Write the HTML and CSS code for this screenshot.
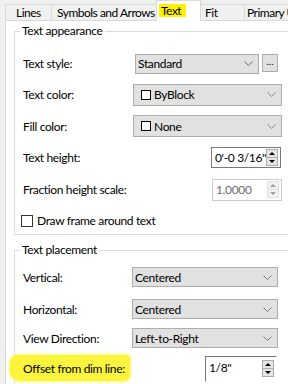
FILE: index.html
```html
<!DOCTYPE html>
<html lang="en">
<head>
    <meta charset="UTF-8">
    <meta name="viewport" content="width=device-width, initial-scale=1.0">
    <title>Dimension Style - Text</title>
    <link rel="stylesheet" href="styles.css">
</head>
<body>

<div class="window">
    <div class="tabs">
        <div class="tab tab-lines">Lines</div>
        <div class="tab tab-symbols">Symbols and Arrows</div>
        <div class="tab tab-text active"><span class="mark">Text</span></div>
        <div class="tab tab-fit">Fit</div>
        <div class="tab tab-primary">Primary U</div>
    </div>

    <div class="panel">
        <fieldset class="group">
            <legend>Text appearance</legend>

            <div class="row row-style">
                <span class="label">Text style:</span>
                <div class="combo combo-style">
                    <span class="value">Standard</span>
                    <svg class="chev" width="9" height="5" viewBox="0 0 9 5"><polyline points="0.5,0.5 4.5,4.5 8.5,0.5" fill="none" stroke="#6a6a6a" stroke-width="1"/></svg>
                </div>
                <div class="dots">...</div>
            </div>

            <div class="row row-color">
                <span class="label">Text color:</span>
                <div class="combo combo-color">
                    <span class="swatch"></span>
                    <span class="value">ByBlock</span>
                    <svg class="chev" width="9" height="5" viewBox="0 0 9 5"><polyline points="0.5,0.5 4.5,4.5 8.5,0.5" fill="none" stroke="#8a8a8a" stroke-width="1"/></svg>
                </div>
            </div>

            <div class="row row-fill">
                <span class="label">Fill color:</span>
                <div class="combo combo-color">
                    <span class="swatch"></span>
                    <span class="value">None</span>
                    <svg class="chev" width="9" height="5" viewBox="0 0 9 5"><polyline points="0.5,0.5 4.5,4.5 8.5,0.5" fill="none" stroke="#8a8a8a" stroke-width="1"/></svg>
                </div>
            </div>

            <div class="row row-height">
                <span class="label">Text height:</span>
                <div class="spin spin-height">
                    <span class="value">0'-0 3/16"</span>
                    <div class="spin-btns">
                        <div class="spin-btn"><span class="tri-up"></span></div>
                        <div class="spin-btn"><span class="tri-down"></span></div>
                    </div>
                </div>
            </div>

            <div class="row row-fraction">
                <span class="label">Fraction height scale:</span>
                <div class="spin spin-fraction disabled">
                    <span class="value">1.0000</span>
                    <div class="spin-btns">
                        <div class="spin-btn"><span class="tri-up"></span></div>
                        <div class="spin-btn"><span class="tri-down"></span></div>
                    </div>
                </div>
            </div>

            <div class="row row-check">
                <span class="checkbox"></span>
                <span>Draw frame around text</span>
            </div>
        </fieldset>

        <fieldset class="group group-placement">
            <legend>Text placement</legend>

            <div class="row row-vertical">
                <span class="label">Vertical:</span>
                <div class="combo combo-place">
                    <span class="value">Centered</span>
                    <svg class="chev" width="9" height="5" viewBox="0 0 9 5"><polyline points="0.5,0.5 4.5,4.5 8.5,0.5" fill="none" stroke="#7a7a7a" stroke-width="1"/></svg>
                </div>
            </div>

            <div class="row row-horizontal">
                <span class="label">Horizontal:</span>
                <div class="combo combo-place">
                    <span class="value">Centered</span>
                    <svg class="chev" width="9" height="5" viewBox="0 0 9 5"><polyline points="0.5,0.5 4.5,4.5 8.5,0.5" fill="none" stroke="#7a7a7a" stroke-width="1"/></svg>
                </div>
            </div>

            <div class="row row-view">
                <span class="label">View Direction:</span>
                <div class="combo combo-place">
                    <span class="value">Left-to-Right</span>
                    <svg class="chev" width="9" height="5" viewBox="0 0 9 5"><polyline points="0.5,0.5 4.5,4.5 8.5,0.5" fill="none" stroke="#7a7a7a" stroke-width="1"/></svg>
                </div>
            </div>

            <div class="row row-offset">
                <span class="label"><span class="marker">Offset from dim line:</span></span>
                <div class="spin spin-offset">
                    <span class="value">1/8"</span>
                    <div class="spin-btns">
                        <div class="spin-btn"><span class="tri-up"></span></div>
                        <div class="spin-btn"><span class="tri-down"></span></div>
                    </div>
                </div>
            </div>
        </fieldset>
    </div>
</div>

</body>
</html>
```

FILE: styles.css
```css
/* Windows style property dialog, Text tab */
* {
    box-sizing: border-box;
}

body {
    margin: 0;
    background: #f0f0f0;
    color: #000;
    font-family: Lato, "Liberation Sans", Arial, sans-serif;
    font-size: 12px;
    letter-spacing: -0.35px;
    overflow: hidden;
}

.window {
    padding-left: 5px;
    width: 420px;
    height: 384px;
    display: flex;
    flex-direction: column;
}

/* Tabs */
.tabs {
    display: flex;
    align-items: flex-end;
    height: 22px;
    position: relative;
    z-index: 1;
}

.tab {
    height: 16px;
    line-height: 15px;
    border: 1px solid #d9d9d9;
    border-bottom: none;
    margin-right: -1px;
    background: #f0f0f0;
    white-space: nowrap;
    letter-spacing: -0.5px;
}

.tab-lines { width: 47px; padding-left: 10px; }
.tab-symbols { width: 106px; padding-left: 5px; }
.tab-text { width: 45px; padding-left: 2px; }
.tab-fit { width: 45px; padding-left: 4px; }
.tab-primary { width: 60px; padding-left: 2px; }

.tab.active {
    height: 21px;
    margin-bottom: -1px;
    background: #fff;
    padding-top: 2px;
}

.mark {
    display: inline-block;
    background: #fff200;
    padding: 0 5px 0 2px;
    line-height: 13px;
}

/* Panel */
.panel {
    flex: 1;
    background: #fff;
    border-top: 1px solid #d9d9d9;
    border-left: 1px solid #d9d9d9;
    padding: 3px 0 0 8px;
}

.group {
    width: 320px;
    margin: 0;
    padding: 0 0 0 8px;
    border: 1px solid #dcdcdc;
}

.group legend {
    margin-left: -3px;
    padding: 0 2px;
    line-height: 14px;
}

.group-placement {
    margin-top: 8px;
}

.row {
    display: flex;
    align-items: center;
    height: 31px;
}

.label {
    width: 109px;
    flex: none;
    white-space: nowrap;
}

.row-style { margin-top: 10px; }
.row-fill { height: 32px; }
.row-fraction { height: 33px; }
.row-check { height: 27px; margin-left: -2px; margin-top: 1px; }

.row-vertical { margin-top: 2px; height: 36px; }
.row-horizontal { height: 28px; }
.row-view { height: 30px; }

/* Combo boxes */
.combo {
    height: 21px;
    display: flex;
    align-items: center;
    background: #e1e1e1;
    border: 1px solid #adadad;
    padding-left: 2px;
    white-space: nowrap;
}

.combo .value {
    flex: 1;
}

.combo .chev {
    margin-right: 5px;
}

.combo-style {
    width: 124px;
    height: 20px;
    margin-left: 3px;
}

.dots {
    width: 16px;
    height: 18px;
    margin-left: 3px;
    margin-top: -2px;
    background: #e1e1e1;
    border: 1px solid #adadad;
    font-size: 10px;
    letter-spacing: 0;
    line-height: 12px;
    text-align: center;
}

.combo-color {
    width: 149px;
    height: 22px;
    margin-left: 1px;
    padding-left: 7px;
}

.combo-color .value {
    padding-left: 3px;
}

.swatch {
    width: 10px;
    height: 10px;
    border: 1px solid #000;
    background: #fff;
    flex: none;
}

.combo-place {
    width: 146px;
    height: 20px;
}

/* Spin inputs */
.spin {
    height: 21px;
    width: 70px;
    display: flex;
    align-items: center;
    border: 1px solid #7a7a7a;
    background: #fff;
    padding-left: 3px;
    white-space: nowrap;
}

.spin .value {
    flex: 1;
}

.spin-height { margin-left: 79px; }
.spin-fraction { margin-left: 80px; height: 22px; }

.spin-offset {
    margin-left: 73px;
    width: 72px;
    height: 26px;
    align-items: flex-start;
    padding-top: 3px;
    border-color: #7a7a7a #fff #fff #7a7a7a;
}

.spin.disabled {
    border-color: #cccccc;
    color: #6d6d6d;
}

.spin-btns {
    display: flex;
    flex-direction: column;
    margin-right: 2px;
}

.spin-btn {
    width: 12px;
    height: 9px;
    border: 1px solid #adadad;
    background: #e5e5e5;
    display: flex;
    align-items: center;
    justify-content: center;
    margin-top: -1px;
}

.spin-btn:first-child {
    margin-top: 0;
}

.disabled .spin-btn {
    border-color: #e0e0e0;
    background: #f2f2f2;
}

.tri-up {
    border-left: 3px solid transparent;
    border-right: 3px solid transparent;
    border-bottom: 3px solid #000;
}

.tri-down {
    border-left: 3px solid transparent;
    border-right: 3px solid transparent;
    border-top: 3px solid #000;
}

.disabled .tri-up { border-bottom-color: #a0a0a0; }
.disabled .tri-down { border-top-color: #a0a0a0; }

/* Checkbox */
.checkbox {
    width: 12px;
    height: 12px;
    border: 1px solid #333;
    background: #fff;
    margin-right: 4px;
}

/* Highlighter stroke */
.row-offset .label {
    position: relative;
    z-index: 0;
}

.marker {
    position: relative;
}

.marker::before {
    content: "";
    position: absolute;
    left: -13px;
    right: -5px;
    top: -6px;
    bottom: -5px;
    background: #fbf43c;
    border-radius: 8px 4px 6px 10px;
    box-shadow: 0 0 3px 1px #fcf77a;
    z-index: -1;
}
```
